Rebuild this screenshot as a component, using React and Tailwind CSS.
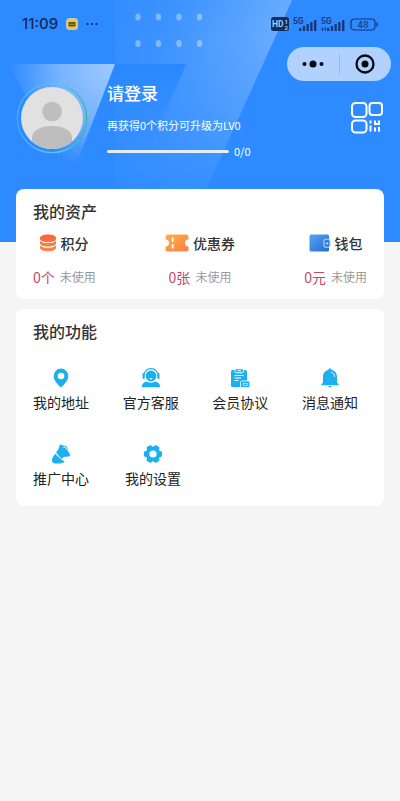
import React from 'react';

function HeaderBackdrop() {
  return (
    <svg className="pointer-events-none absolute left-0 top-0 -z-10" width="400" height="242" viewBox="0 0 400 242" aria-hidden="true">
      <defs>
        <linearGradient id="band" x1="115" y1="0" x2="262" y2="66" gradientUnits="userSpaceOnUse">
          <stop offset="0" stopColor="#fff" stopOpacity="0.02" />
          <stop offset="0.4" stopColor="#fff" stopOpacity="0.08" />
          <stop offset="1" stopColor="#fff" stopOpacity="0.28" />
        </linearGradient>
        <linearGradient id="bandFade" x1="0" y1="0" x2="0" y2="195" gradientUnits="userSpaceOnUse">
          <stop offset="0.2" stopColor="#fff" />
          <stop offset="1" stopColor="#fff" stopOpacity="0.1" />
        </linearGradient>
        <mask id="bandMask">
          <rect width="400" height="242" fill="url(#bandFade)" />
        </mask>
        <radialGradient id="shard" cx="114" cy="68" r="105" gradientUnits="userSpaceOnUse">
          <stop offset="0" stopColor="#fff" stopOpacity="0.54" />
          <stop offset="0.5" stopColor="#fff" stopOpacity="0.36" />
          <stop offset="1" stopColor="#fff" stopOpacity="0" />
        </radialGradient>
        <linearGradient id="dark" x1="115" y1="64" x2="115" y2="150" gradientUnits="userSpaceOnUse">
          <stop offset="0" stopColor="#2988fd" />
          <stop offset="0.5" stopColor="#2e8bff" stopOpacity="0.7" />
          <stop offset="1" stopColor="#2e8bff" stopOpacity="0" />
        </linearGradient>
      </defs>
      <path d="M115 0H292L206 190H115z" fill="url(#band)" mask="url(#bandMask)" />
      <path d="M115 64H186L150 150H82z" fill="url(#dark)" />
      <path d="M8 64H115L71 178z" fill="url(#shard)" />
      <g fill="#fff" fillOpacity="0.36">
        {[138, 158.500, 179, 199.500].map((x) => (
          <g key={x}>
            <ellipse cx={x} cy="17" rx="2.700" ry="3.500" />
            <ellipse cx={x} cy="43.500" rx="2.700" ry="3.500" />
          </g>
        ))}
      </g>
    </svg>
  );
}

function Signal({ dotted }) {
  return (
    <svg width="24" height="16" viewBox="0 0 24 16" fill="#14377c" aria-hidden="true">
      <rect x="6" y="12" width="2.300" height="3" rx="0.500" />
      <rect x="9.800" y="10" width="2.300" height="5" rx="0.500" />
      <rect x="13.500" y="8" width="2.300" height="7" rx="0.500" />
      <rect x="17.200" y="6" width="2.300" height="9" rx="0.500" />
      <rect x="21" y="4" width="2.400" height="11" rx="0.500" />
      {dotted && <path d="M0 13l1.300-1.500L2.600 13H2v2H.8v-2zM3 13.500h.6V11h1.200v2.500h.6L4.200 15z" />}
      <text x="0" y="7.500" fontFamily="Roboto, sans-serif" fontSize="8.500" fontWeight="600">5G</text>
    </svg>
  );
}

function StatusBar() {
  return (
    <div className="flex h-12 items-center px-[22px] text-[#11295c]">
      <span className="font-[Inter,sans-serif] text-[15px] font-medium leading-5">11:09</span>
      <svg className="ml-2" width="12" height="12" viewBox="0 0 12 12" aria-hidden="true">
        <rect x="0.600" y="0.600" width="10.800" height="10.800" rx="3" fill="#f1c83c" stroke="#b5cdbd" strokeWidth="1.200" />
        <rect x="2.500" y="4" width="7" height="4.500" rx="1" fill="#5f4a22" />
        <path d="M3.500 6.200h5" stroke="#e7b92f" strokeWidth="0.800" />
      </svg>
      <svg className="ml-2" width="12" height="4" viewBox="0 0 12 4" fill="currentColor" aria-hidden="true">
        <circle cx="1.500" cy="2" r="1.100" /><circle cx="6" cy="2" r="1.100" /><circle cx="10.500" cy="2" r="1.100" />
      </svg>
      <div className="ml-auto flex items-center gap-1">
        <svg width="18" height="14" viewBox="0 0 18 14" aria-hidden="true">
          <rect width="18" height="14" rx="2.500" fill="#12305f" />
          <g fill="#a5caff" fontFamily="Roboto, sans-serif" fontWeight="700">
            <text x="1" y="10" fontSize="8.500">HD</text>
            <text x="13.600" y="6.500" fontSize="6">1</text>
            <text x="13.600" y="12.500" fontSize="6">2</text>
          </g>
        </svg>
        <Signal />
        <Signal dotted />
        <svg width="29" height="13" viewBox="0 0 29 13" fill="none" aria-hidden="true">
          <rect x="2" y="1" width="24" height="11" rx="3.500" stroke="#14377c" strokeWidth="1.200" />
          <path d="M28 5v3" stroke="#14377c" strokeWidth="1.400" strokeLinecap="round" />
          <text x="14" y="10" textAnchor="middle" fill="#14377c" fontFamily="Inter, sans-serif" fontSize="9" fontWeight="500">48</text>
        </svg>
      </div>
    </div>
  );
}

function Capsule() {
  return (
    <div className="absolute right-[9px] top-[47px] flex h-[34px] w-[104px] items-center rounded-full bg-[#b1d2ff]">
      <button type="button" aria-label="更多" className="flex h-full flex-1 items-center justify-center">
        <svg width="22" height="8" viewBox="0 0 22 8" fill="#05080d">
          <circle cx="2.500" cy="4" r="2" /><circle cx="11" cy="4" r="3.500" /><circle cx="19.500" cy="4" r="2" />
        </svg>
      </button>
      <span className="h-5 w-px bg-[#93b8ec]" />
      <button type="button" aria-label="关闭" className="flex h-full flex-1 items-center justify-center">
        <svg width="20" height="20" viewBox="0 0 20 20">
          <circle cx="10" cy="10" r="8.500" fill="none" stroke="#05080d" strokeWidth="2.300" />
          <circle cx="10" cy="10" r="3.500" fill="#05080d" />
        </svg>
      </button>
    </div>
  );
}

function Avatar() {
  return (
    <svg width="72" height="72" viewBox="0 0 72 72" role="img" aria-label="头像">
      <defs>
        <linearGradient id="ring" x1="0" y1="0" x2="1" y2="0">
          <stop offset="0" stopColor="#48acf8" /><stop offset="0.600" stopColor="#55cdee" /><stop offset="1" stopColor="#31b795" />
        </linearGradient>
        <clipPath id="face"><circle cx="36" cy="36" r="31" /></clipPath>
      </defs>
      <circle cx="36" cy="36" r="34.700" fill="none" stroke="url(#ring)" strokeWidth="1.200" />
      <circle cx="36" cy="36" r="31" fill="#e1e1e1" />
      <g clipPath="url(#face)" fill="#bdbdbd">
        <circle cx="36" cy="29.500" r="9.800" />
        <path d="M16 70V56c0-8 9-12 20-12s20 4 20 12v14z" />
      </g>
    </svg>
  );
}

function QrIcon() {
  return (
    <svg width="34" height="34" viewBox="0 0 34 34" fill="none" stroke="#fff" strokeWidth="2">
      <rect x="2" y="2" width="14.500" height="14" rx="3.500" />
      <rect x="19.500" y="2" width="12.500" height="12" rx="3" />
      <rect x="2" y="19.500" width="14.500" height="12" rx="3.500" />
      <path d="M20.500 19.500v3M20.500 24.500v6M25 19.500v4.500M25 26.500v4M29 19.500v4.500M29 26v4.500M25 23h4" />
    </svg>
  );
}

function CoinsIcon() {
  return (
    <svg width="16" height="18" viewBox="0 0 16 18" aria-hidden="true">
      <defs>
        <linearGradient id="coins" x1="0" y1="0" x2="0" y2="18" gradientUnits="userSpaceOnUse"><stop offset="0" stopColor="#fa6338" /><stop offset="1" stopColor="#f98a4b" /></linearGradient>
      </defs>
      <g fill="url(#coins)">
        <path d="M0 4C0 1.800 3.500.5 8 .5S16 1.800 16 4v1C16 7 12.500 8.200 8 8.200S0 7 0 5z" />
        <path d="M0 6.800C1.500 8.600 4.500 9.300 8 9.300s6.500-.7 8-2.500v2.400c0 2-3.500 3.300-8 3.300s-8-1.300-8-3.300z" />
        <path d="M0 11.400c1.500 1.800 4.500 2.300 8 2.300s6.500-.5 8-2.300v2.400c0 2-3.500 3.500-8 3.500s-8-1.500-8-3.500z" />
      </g>
    </svg>
  );
}

function CouponIcon() {
  return (
    <svg width="24" height="18" viewBox="0 0 24 18" aria-hidden="true">
      <defs>
        <linearGradient id="coupon" x1="0" y1="0" x2="1" y2="1"><stop offset="0" stopColor="#fbb044" /><stop offset="1" stopColor="#f98049" /></linearGradient>
      </defs>
      <path d="M3 .5h18A2.500 2.500 0 0 1 23.500 3v2.500a3.500 3.500 0 0 0 0 7V15a2.500 2.500 0 0 1-2.500 2.500H3A2.500 2.500 0 0 1 .5 15v-2.500a3.500 3.500 0 0 0 0-7V3A2.500 2.500 0 0 1 3 .5z" fill="url(#coupon)" />
      <path d="M7.700 4.500v2.500M7.700 11v2.500" stroke="#fff" strokeWidth="1.900" strokeLinecap="round" />
    </svg>
  );
}

function WalletIcon() {
  return (
    <svg width="22" height="18" viewBox="0 0 22 18" aria-hidden="true">
      <defs>
        <linearGradient id="wallet" x1="0" y1="0" x2="1" y2="1"><stop offset="0" stopColor="#58a2f4" /><stop offset="1" stopColor="#246dd0" /></linearGradient>
      </defs>
      <rect x="0.500" y="0.500" width="19.500" height="17" rx="1.500" fill="url(#wallet)" />
      <rect x="15" y="5.300" width="6" height="8" rx="1.800" fill="#3580de" stroke="#b5d6fb" strokeWidth="1.100" />
      <circle cx="18" cy="9.300" r="0.900" fill="#fff" />
    </svg>
  );
}

const BLUE = '#1cb0f1';

function PinIcon() {
  return (
    <svg width="20" height="20" viewBox="0 0 20 20" aria-hidden="true">
      <path fillRule="evenodd" fill={BLUE} d="M10 .5a7.300 7.300 0 0 1 7.300 7.400C17.300 12.300 13.500 16 10 19.500 6.500 16 2.700 12.300 2.700 7.900A7.300 7.300 0 0 1 10 .5zm0 4.200a3.300 3.300 0 1 0 0 6.600 3.300 3.300 0 0 0 0-6.600z" />
    </svg>
  );
}

function ServiceIcon() {
  return (
    <svg width="20" height="20" viewBox="0 0 20 20" aria-hidden="true">
      <circle cx="10" cy="8" r="5.400" fill={BLUE} />
      <path d="M2.700 8a7.300 7.300 0 0 1 14.600 0" fill="none" stroke={BLUE} strokeWidth="1.200" />
      <path d="M2.600 6v4M17.400 6v4" stroke={BLUE} strokeWidth="2.200" strokeLinecap="round" />
      <path d="M8.400 10.200h3.200a1.600 1.300 0 0 1-3.200 0z" fill="#fff" />
      <path d="M.8 19.300c0-3.600 2.300-5.600 5.400-5.600 2.200 1.300 5.400 1.300 7.600 0 3.100 0 5.400 2 5.400 5.600z" fill={BLUE} />
    </svg>
  );
}

function AgreementIcon() {
  return (
    <svg width="20" height="20" viewBox="0 0 20 20" aria-hidden="true">
      <rect x="1" y="2" width="16" height="17" rx="1.500" fill={BLUE} />
      <rect x="5" y="0.800" width="8.500" height="4" rx="1.300" fill={BLUE} stroke="#fff" strokeWidth="0.900" />
      <path d="M7.500 2.800h3.500M4.500 7.500h9M4.500 10h6.500M4.500 12.500h4" stroke="#fff" strokeWidth="1" />
      <rect x="10.500" y="13" width="9.200" height="6.600" rx="1.300" fill={BLUE} stroke="#fff" strokeWidth="0.800" />
      <rect x="13.200" y="15.300" width="4" height="2" fill="none" stroke="#fff" strokeWidth="0.600" />
    </svg>
  );
}

function BellIcon() {
  return (
    <svg width="20" height="20" viewBox="0 0 20 20" aria-hidden="true">
      <path fill={BLUE} d="M10 .4c1 0 1.600.7 1.600 1.600 3.300.7 5.400 3.300 5.400 6.600v6l1.700 1.600v1.100H1.300v-1.100L3 14.600v-6C3 5.300 5.100 2.700 8.400 2 8.400 1.100 9 .4 10 .4zM8.300 18h3.400a1.700 1.400 0 0 1-3.400 0z" />
      <path d="M11.300 4.300c2 .5 3.200 2 3.300 4.200" fill="none" stroke="#fff" strokeWidth="0.900" strokeLinecap="round" />
    </svg>
  );
}

function PromoteIcon() {
  return (
    <svg width="20" height="20" viewBox="0 0 20 20" aria-hidden="true">
      <path d="M9.300.6l1.800.9 4.400 1.200 1.300 2.800-.2 1.500 2.600 4.200-1 .9-5.400.7-2.300 1.900L5.300 8.400 7.700 5z" fill={BLUE} stroke={BLUE} strokeWidth="0.600" strokeLinejoin="round" />
      <path d="M12.200 3.300c2-.5 3.900.9 4 3" fill="none" stroke="#fff" strokeWidth="0.900" />
      <path d="M4.300 9.700l6.200 6c1.300.8 3 1 2.700 2.100-.4 1.200-2 .8-3.200 1.400-.8.500-1.700.3-2.600.2H4.200C2 19.400.8 17.900 1 15.900c.2-2.400 1.400-4.400 3.300-6.200z" fill={BLUE} />
    </svg>
  );
}

function GearIcon() {
  return (
    <svg width="20" height="20" viewBox="0 0 20 20" aria-hidden="true">
      <g fill={BLUE}>
        <circle cx="10" cy="10" r="7.400" />
        {[0, 60, 120].map((angle) => (
          <rect key={angle} x="0.900" y="7" width="18.200" height="6" rx="1.800" transform={`rotate(${angle} 10 10)`} />
        ))}
      </g>
      <circle cx="10" cy="10" r="3.600" fill="#fff" />
    </svg>
  );
}

const assets = [
  { label: '积分', amount: '0个', Icon: CoinsIcon },
  { label: '优惠券', amount: '0张', Icon: CouponIcon },
  { label: '钱包', amount: '0元', Icon: WalletIcon },
];

function Feature({ label, Icon }) {
  return (
    <button type="button" className="flex w-14 flex-col items-center gap-1 whitespace-nowrap text-[14px] leading-5 text-[#222]">
      <Icon />
      {label}
    </button>
  );
}

export default function App() {
  return (
    <div className="min-h-screen bg-[#f5f5f5] font-['Noto_Sans_CJK_SC',sans-serif]">
      <div className="relative isolate">
        <div className="absolute inset-x-0 top-0 -z-20 h-[242px] bg-[#2e8bff]" />
        <HeaderBackdrop />
        <StatusBar />
        <Capsule />
        <header className="flex px-4 pt-[33px] text-white">
          <div className="pt-px"><Avatar /></div>
          <div className="ml-[19px] flex flex-1 flex-col">
            <h1 className="text-[17px] font-medium leading-6">请登录</h1>
            <p className="mt-3 text-[11px] leading-4">再获得0个积分可升级为LV0</p>
            <div className="mt-[10px] flex items-center gap-[5px]">
              <div role="progressbar" aria-label="积分" aria-valuenow={0} className="h-[3px] w-[122px] rounded-full bg-[#e6edf5]" />
              <span className="text-[11px] leading-4">0/0</span>
            </div>
          </div>
          <button type="button" aria-label="二维码" className="mt-5 self-start"><QrIcon /></button>
        </header>
      </div>
      <main className="relative flex flex-col gap-[10px] px-4 pt-[30px]">
        <section className="rounded-lg bg-white px-[17px] pb-3 pt-[10px]">
          <h2 className="text-[16px] font-medium leading-6 text-[#333]">我的资产</h2>
          <div className="mt-[10px] flex justify-between">
            {assets.map(({ label, amount, Icon }) => (
              <button type="button" key={label} className="flex flex-col items-center gap-[14px] whitespace-nowrap">
                <span className="flex items-center gap-1 text-[14px] font-medium leading-5 text-[#333]"><Icon />{label}</span>
                <span className="flex items-center gap-[5px] text-[14px] leading-5 text-[#c34a65]">{amount}<span className="text-[12px] text-[#999]">未使用</span></span>
              </button>
            ))}
          </div>
        </section>
        <section className="rounded-lg bg-white pb-[18px] pl-[17px] pr-[26px] pt-[10px]">
          <h2 className="text-[16px] font-medium leading-6 text-[#333]">我的功能</h2>
          <div className="mt-[25px] flex justify-between">
            <Feature label="我的地址" Icon={PinIcon} />
            <Feature label="官方客服" Icon={ServiceIcon} />
            <Feature label="会员协议" Icon={AgreementIcon} />
            <Feature label="消息通知" Icon={BellIcon} />
          </div>
          <div className="mt-8 flex gap-9">
            <Feature label="推广中心" Icon={PromoteIcon} />
            <Feature label="我的设置" Icon={GearIcon} />
          </div>
        </section>
      </main>
    </div>
  );
}
